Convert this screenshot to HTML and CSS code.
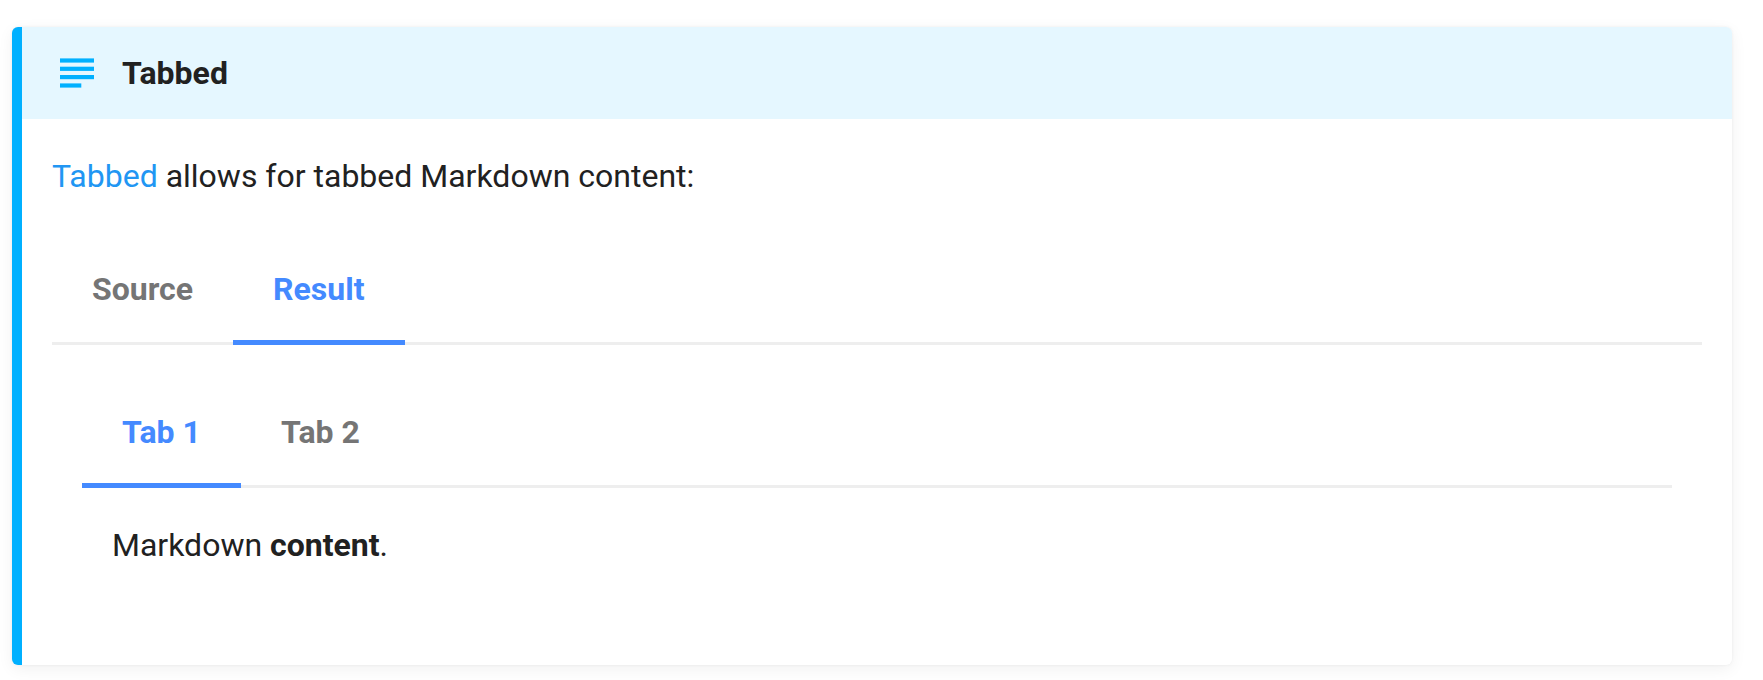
FILE: index.html
```html
<!DOCTYPE html>
<html lang="en">
<head>
    <meta charset="UTF-8">
    <title>Tabbed</title>
    <link rel="stylesheet" href="styles.css">
</head>
<body>
    <div class="admonition">
        <div class="admonition-title">
            <svg class="title-icon" viewBox="0 0 34 30" width="34" height="30">
                <rect x="0" y="0.4" width="34" height="4.2"></rect>
                <rect x="0" y="8.7" width="34" height="4.2"></rect>
                <rect x="0" y="17" width="34" height="4.2"></rect>
                <rect x="0" y="25.4" width="21.3" height="4.2"></rect>
            </svg>
            <span>Tabbed</span>
        </div>
        <p class="intro"><a href="#">Tabbed</a> allows for tabbed Markdown content:</p>

        <div class="tabs outer-tabs">
            <a class="tab" href="#">Source</a>
            <a class="tab active" href="#">Result</a>
        </div>

        <div class="inner">
            <div class="tabs">
                <a class="tab active" href="#">Tab 1</a>
                <a class="tab" href="#">Tab 2</a>
            </div>
            <p class="tab-content">Markdown <strong>content</strong>.</p>
        </div>
    </div>
</body>
</html>
```

FILE: styles.css
```css
body {
    margin: 0;
    padding: 27px 31px 15px 12px;
    background-color: #fff;
    color: #212121;
    font-family: Roboto, sans-serif;
}

.admonition {
    height: 638px;
    box-sizing: border-box;
    border-left: 10px solid #00b0ff;
    border-radius: 6px;
    overflow: hidden;
    background-color: #fff;
    box-shadow: 0 4px 16px rgba(0, 0, 0, 0.06), 0 0 3px rgba(0, 0, 0, 0.06);
}

.admonition-title {
    display: flex;
    align-items: center;
    gap: 28px;
    height: 92px;
    padding-left: 38px;
    background-color: #e5f7ff;
    font-size: 32px;
    font-weight: 700;
}

.title-icon {
    fill: #00b0ff;
}

.intro {
    margin: 37px 0 0 30px;
    font-size: 32px;
    line-height: 40px;
}

.intro a {
    color: #2196f3;
    text-decoration: none;
}

.tabs {
    display: flex;
    border-bottom: 3px solid #eeeeee;
}

.outer-tabs {
    margin: 49px 30px 0 30px;
}

.tab {
    padding: 24px 40px 31px;
    margin-bottom: -3px;
    border-bottom: 5px solid transparent;
    color: #757575;
    font-size: 32px;
    line-height: 40px;
    font-weight: 700;
    text-decoration: none;
}

.tab.active {
    color: #448aff;
    border-bottom-color: #448aff;
}

.inner {
    margin: 43px 60px 0 60px;
}

.tab-content {
    margin: 37px 0 0 30px;
    font-size: 32px;
    line-height: 40px;
}
```
